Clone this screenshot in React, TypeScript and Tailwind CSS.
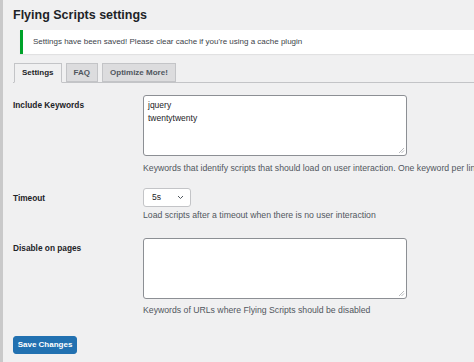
import React from "react";

export default function App() {
  return (
    <div
      className="w-[474px] h-[362px] overflow-hidden bg-[#f0f0f1] flex text-[#1d2327]"
      style={{ fontFamily: '"Liberation Sans", Arial, sans-serif' }}
    >
      <div className="w-[3px] shrink-0 bg-[#c9c9ca]" />
      <div className="flex-1 min-w-0 flex flex-col pl-[10px]">
        <h1 className="mt-[8px] text-[12.5px] font-bold leading-[15px]">Flying Scripts settings</h1>
        <div className="mt-[7px] ml-[7px] h-[24px] shrink-0 bg-white border-l-[3px] border-[#00a32a] flex items-center pl-[10px] shadow-[0_1px_1px_rgba(0,0,0,0.06)]">
          <span className="text-[8px] text-[#3c434a] whitespace-nowrap">
            Settings have been saved! Please clear cache if you're using a cache plugin
          </span>
        </div>
        <div className="mt-[9px] flex items-end gap-[4px] border-b border-[#c3c4c7] pl-[1px]">
          <div className="h-[20px] px-[7px] flex items-center bg-[#f0f0f1] border border-[#c3c4c7] border-b-[#f0f0f1] -mb-px text-[8px] font-bold">
            Settings
          </div>
          <div className="h-[19px] px-[7px] flex items-center bg-[#dcdcde] border border-[#c3c4c7] text-[8px] font-bold text-[#50575e]">
            FAQ
          </div>
          <div className="h-[19px] px-[7px] flex items-center bg-[#dcdcde] border border-[#c3c4c7] text-[8px] font-bold text-[#50575e]">
            Optimize More!
          </div>
        </div>

        <div className="mt-[12px] flex">
          <div className="w-[130px] shrink-0 pt-[4px] text-[8.3px] font-bold">Include Keywords</div>
          <div className="flex flex-col">
            <div className="w-[264px] h-[61px] bg-white border border-[#8c8f94] rounded-[3px] px-[4px] py-[3px] text-[8.5px] leading-[13px] relative">
              <div>jquery</div>
              <div>twentytwenty</div>
              <Grip />
            </div>
            <div className="mt-[6px] text-[8.7px] text-[#50575e] whitespace-nowrap">
              Keywords that identify scripts that should load on user interaction. One keyword per line
            </div>
          </div>
        </div>

        <div className="mt-[13px] flex">
          <div className="w-[130px] shrink-0 pt-[4px] text-[8.3px] font-bold">Timeout</div>
          <div className="flex flex-col">
            <div className="w-[48px] h-[19px] bg-white border border-[#c3c4c7] rounded-[3px] flex items-center justify-between pl-[8px] pr-[6px] text-[8.5px]">
              <span>5s</span>
              <svg width="7" height="5" viewBox="0 0 7 5">
                <path d="M1 1 L3.5 3.5 L6 1" stroke="#50575e" strokeWidth="1" fill="none" />
              </svg>
            </div>
            <div className="mt-[2px] text-[8.7px] text-[#50575e] whitespace-nowrap">
              Load scripts after a timeout when there is no user interaction
            </div>
          </div>
        </div>

        <div className="mt-[16px] flex">
          <div className="w-[130px] shrink-0 pt-[4px] text-[8.3px] font-bold">Disable on pages</div>
          <div className="flex flex-col">
            <div className="w-[264px] h-[61px] bg-white border border-[#8c8f94] rounded-[3px] relative">
              <Grip />
            </div>
            <div className="mt-[5px] text-[8.7px] text-[#50575e] whitespace-nowrap">
              Keywords of URLs where Flying Scripts should be disabled
            </div>
          </div>
        </div>

        <div className="mt-[13px]">
          <button className="h-[18px] w-[64px] bg-[#2271b1] border border-[#2271b1] rounded-[3px] text-white text-[8px] font-bold">
            Save Changes
          </button>
        </div>
      </div>
    </div>
  );
}

function Grip() {
  return (
    <svg className="absolute right-[1px] bottom-[1px]" width="7" height="7" viewBox="0 0 7 7">
      <path d="M6 1 L1 6 M6 3.5 L3.5 6" stroke="#a7aaad" strokeWidth="0.8" />
    </svg>
  );
}
